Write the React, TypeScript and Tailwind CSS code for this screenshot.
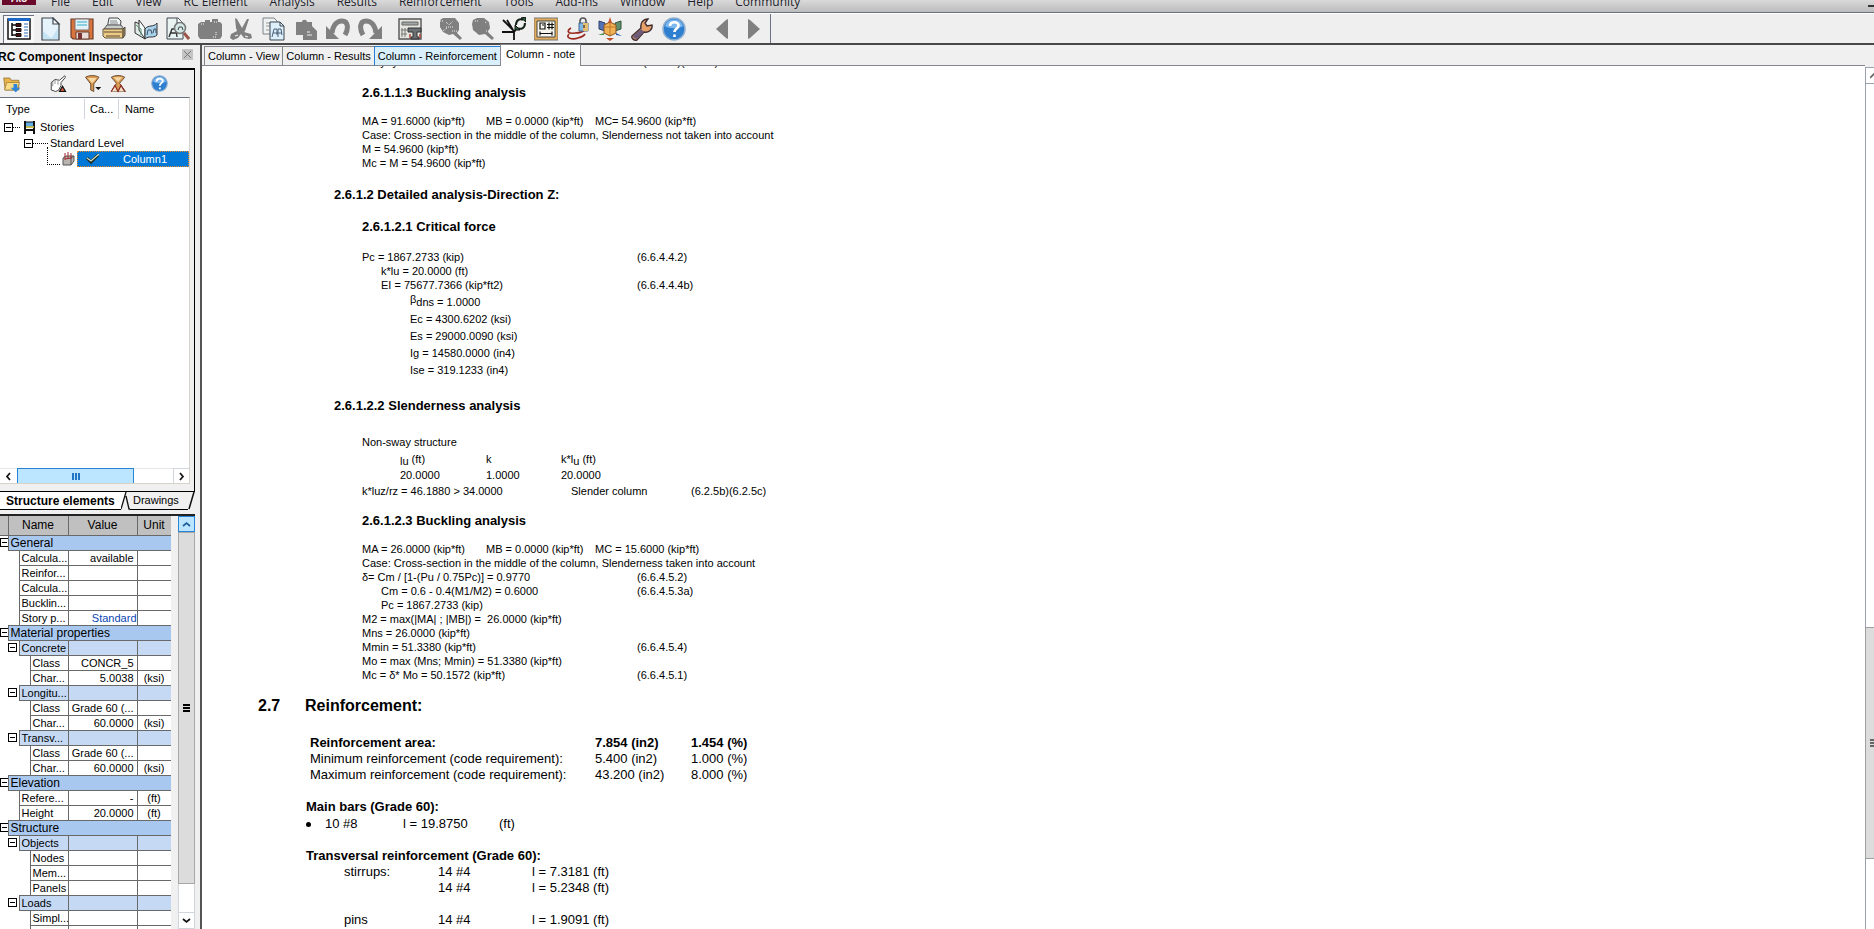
import { useState, type ReactNode } from "react";

const menus = ["File", "Edit", "View", "RC Element", "Analysis", "Results", "Reinforcement", "Tools", "Add-Ins", "Window", "Help", "Community"];

const tabs = ["Column - View", "Column - Results", "Column - Reinforcement", "Column - note"];

type PropRow = { level: 1 | 2 | 3; group?: boolean; name: string; value?: string; unit?: string; link?: boolean };

const props: PropRow[] = [
    { level: 1, group: true, name: "General" },
    { level: 2, name: "Calcula...", value: "available" },
    { level: 2, name: "Reinfor..." },
    { level: 2, name: "Calcula..." },
    { level: 2, name: "Bucklin..." },
    { level: 2, name: "Story p...", value: "Standard", link: true },
    { level: 1, group: true, name: "Material properties" },
    { level: 2, group: true, name: "Concrete" },
    { level: 3, name: "Class", value: "CONCR_5" },
    { level: 3, name: "Char...", value: "5.0038", unit: "(ksi)" },
    { level: 2, group: true, name: "Longitu..." },
    { level: 3, name: "Class", value: "Grade 60 (..." },
    { level: 3, name: "Char...", value: "60.0000", unit: "(ksi)" },
    { level: 2, group: true, name: "Transv..." },
    { level: 3, name: "Class", value: "Grade 60 (..." },
    { level: 3, name: "Char...", value: "60.0000", unit: "(ksi)" },
    { level: 1, group: true, name: "Elevation" },
    { level: 2, name: "Refere...", value: "-", unit: "(ft)" },
    { level: 2, name: "Height", value: "20.0000", unit: "(ft)" },
    { level: 1, group: true, name: "Structure" },
    { level: 2, group: true, name: "Objects" },
    { level: 3, name: "Nodes" },
    { level: 3, name: "Mem..." },
    { level: 3, name: "Panels" },
    { level: 2, group: true, name: "Loads" },
    { level: 3, name: "Simpl..." },
    { level: 3, name: "" },
];

function Svg({ size = 24, children }: { size?: number; children: ReactNode }) {
    return (
        <svg width={size} height={size} viewBox="0 0 24 24" fill="none" className="block shrink-0">
            {children}
        </svg>
    );
}

const HelpIcon = ({ size = 24 }: { size?: number }) => (
    <Svg size={size}>
        <circle cx="12" cy="12" r="11" fill="#2f7fd0" stroke="#8fb0d0" strokeWidth="1.5" />
        <path d="M3 9a9.5 9.5 0 0 1 18 0c-4 3-14 3-18 0z" fill="#7db8ee" />
        <path d="M8 9c0-5 8.500-5 8.500-.5 0 3-4 3-4 6.500M12.500 17.500v2.500" stroke="#fff" strokeWidth="2.600" />
    </Svg>
);

const icons: Record<string, ReactNode> = {
    "Inspector": (
        <Svg>
            <path d="M1 2h22v20H1z" fill="#fff" stroke="#111" strokeWidth="1.500" />
            <path d="M1 1h22v3H1z" fill="#1766c8" />
            <path d="M5 6v13M5 8h5M5 13h6M5 18h5" stroke="#111" strokeWidth="1.600" />
            <path d="M9 6.500h5v3H9zM9 11.500h5v3H9zM9 16.500h5v3H9z" fill="#4a1010" stroke="#111" />
            <path d="M17 7h4M17 10h4M17 13h4M17 16h4M17 19h4" stroke="#2f6fb8" strokeWidth="1.200" />
        </Svg>
    ),
    "New": (
        <Svg>
            <path d="M4 1h11l6 6v16H4z" fill="#e6f3fa" stroke="#3c4650" strokeWidth="1.200" />
            <path d="M5 14l9 8H5zM20 11v11h-7z" fill="#b5dcf0" opacity=".7" />
            <path d="M15 1v6h6z" fill="#fff" stroke="#3c4650" strokeWidth="1.200" />
        </Svg>
    ),
    "Save": (
        <Svg>
            <path d="M1 2h22v20H3l-2-2z" fill="#d9743c" stroke="#6b3d2c" strokeWidth="1.200" />
            <path d="M5 2h14v11H5z" fill="#e4f2f8" stroke="#7c6a6a" />
            <path d="M7 5h10M7 8h10" stroke="#6cc3d8" strokeWidth="1.300" />
            <path d="M6 15h13v7H6z" fill="#e8dcd8" stroke="#6b3d2c" />
            <path d="M8 16h4v6H8z" fill="#7a3232" />
        </Svg>
    ),
    "Print": (
        <Svg>
            <path d="M7 1h9l3 3-1 8H5z" fill="#eef4f5" stroke="#444" />
            <path d="M8 4h7M8 6h8M7 8h9" stroke="#888" />
            <path d="M2 12l3-4h14l3 4z" fill="#c9ccc8" stroke="#555" />
            <path d="M1 12h20v9H3l-2-2z" fill="#eccb86" stroke="#665a44" />
            <path d="M21 12l2-2v8l-2 3z" fill="#a98c60" stroke="#554a3c" />
            <path d="M2 15h19M4 19h14" stroke="#8d7550" strokeWidth="1.300" />
        </Svg>
    ),
    "Preview book": (
        <Svg>
            <path d="M1 5l5 2 5 7v8l-5-3-5-3z" fill="#e0ebe8" stroke="#333" />
            <path d="M5 3l6 8v11l-6-9z" fill="#f8fbfb" stroke="#333" />
            <path d="M11 12c4-5 8-1 12-6v12c-4 4-8 0-12 4z" fill="#a9d3ec" stroke="#333" />
            <path d="M13 18l1-5h3l1 4M19 16l1-4 2 0v4" stroke="#414f60" />
            <path d="M2 8l5 4v6" stroke="#55946e" />
        </Svg>
    ),
    "Print preview": (
        <Svg>
            <path d="M1 1h11l5 5v16H1z" fill="#e8f3f2" stroke="#3c4650" />
            <path d="M11 1v5h6" fill="#fff" stroke="#3c4650" />
            <path d="M3 20l3-8h4l1 8M5 16h6" stroke="#333" strokeWidth="1.400" />
            <circle cx="14" cy="11" r="5.500" fill="#d5e8e8" stroke="#777" strokeWidth="1.500" />
            <path d="M12 13l1-3 3 0 1 3" stroke="#444" />
            <path d="M18 16l5 6" stroke="#9a5648" strokeWidth="3" />
        </Svg>
    ),
    "Camera": (
        <Svg>
            <path d="M3 5h4V3h5v2h2V2h6v3h2l2 2v12l-2 3H2l-2-3V7z" fill="#808080" />
            <path d="M3 7h4M16 5h4" stroke="#efefef" strokeDasharray="1 1" />
            <path d="M18 15v4M15 20h4" stroke="#fff" strokeDasharray="1 1" />
        </Svg>
    ),
    "Cut": (
        <Svg>
            <path d="M5 1l2 1 5 9 5-9 2 0-4 12-1 1 7 2 1 4-3 1-5-1-3-4-3 4-5 2-3-2 1-4 6-3-1-3z" fill="#808080" />
            <path d="M5 19l3-1M15 19l3 1" stroke="#efefef" strokeWidth="1.200" />
        </Svg>
    ),
    "Copy": (
        <Svg>
            <path d="M1 1h11l3 3v13H1z" fill="#eef2f2" stroke="#7c8488" />
            <path d="M4 6h6M4 9h5M4 13h3" stroke="#999" />
            <path d="M8 5h10l4 4v14H8z" fill="#dceffa" stroke="#3c4650" />
            <path d="M18 5v4h4" stroke="#3c4650" />
            <path d="M10 20l2-8h3v6M16 20v-8h3l1 6M11 16h9" stroke="#4a6078" />
        </Svg>
    ),
    "Paste": (
        <Svg>
            <path d="M2 5h6c0-3 5-3 5 0h5v4l5 5v9H9v-5H2z" fill="#808080" />
            <path d="M13 15h3M13 18h5" stroke="#efefef" strokeWidth="1.200" />
        </Svg>
    ),
    "Undo": (
        <Svg>
            <path d="M0 22V9l13 13z" fill="#808080" />
            <path d="M6 16C7 8 11 4 16 4c6 0 7 7 3 14" stroke="#808080" strokeWidth="5" />
        </Svg>
    ),
    "Redo": (
        <Svg>
            <path d="M24 22V9L11 22z" fill="#808080" />
            <path d="M18 16C17 8 13 4 8 4 2 4 1 11 5 18" stroke="#808080" strokeWidth="5" />
        </Svg>
    ),
    "Calculate": (
        <Svg>
            <path d="M1 2h22v20H1z" fill="#e6e6e0" stroke="#555" strokeWidth="1.400" />
            <path d="M4 5h16v3H4z" fill="#9fa7a4" stroke="#666" />
            <path d="M3 13h6M3 17h6M4 11v9M7 11v9" stroke="#777" />
            <path d="M10 11h13v4h-4v5h2v2h-8v-2h2v-5h-5z" fill="#6c7173" stroke="#333" />
            <path d="M12 17v4M22 17v4" stroke="#b4463c" strokeWidth="1.500" />
        </Svg>
    ),
    "Zoom window": (
        <Svg>
            <path d="M5 1h12l4 5v7l-2 3 5 5-2 2-7-6-4 1-6-3-3-5V3z" fill="#808080" />
            <path d="M2 4h3M8 5l3 3 4-4M8 10h8M5 14l4-3M14 14h5" stroke="#efefef" strokeDasharray="1 1" />
        </Svg>
    ),
    "Zoom": (
        <Svg>
            <path d="M7 1h7l5 4 1 6-2 4 6 6-2 2-7-6-6 1-6-5-1-6 1-4z" fill="#808080" />
            <path d="M5 4h3M15 5l2 1M16 14h3" stroke="#efefef" strokeDasharray="1 1" />
        </Svg>
    ),
    "Axes": (
        <Svg>
            <path d="M1 3l11 11v9M0 15h12l3-4M5 3l6 10" stroke="#111" strokeWidth="1.800" />
            <path d="M14 8c0-5 4-7 7-5M23 6c0 5-4 7-7 5" stroke="#142018" strokeWidth="2" />
            <path d="M19 1l5-1v5zM18 13l-5 0v-5z" fill="#27593a" stroke="#111" />
        </Svg>
    ),
    "Display settings": (
        <Svg>
            <path d="M0 1h24v22H0z" fill="#e2ab58" stroke="#777" />
            <path d="M3 4h18v16H3z" fill="#f6f6ee" stroke="#444" />
            <path d="M6 6h5v6H6zM8 8h2M13 7.500h7M13 10.500h7M15 5.500v7M18 5.500v7M6 16.500h12M6 14.500v4M18 14.500v4" stroke="#111" strokeWidth="1.200" />
        </Svg>
    ),
    "Lock reinforcement": (
        <Svg>
            <path d="M5 11c-5 3-3 6 4 5 5 0 9-2 10-4M3 17c-4 4 3 6 9 4 4-1 6-2 7-4" stroke="#9a2a20" strokeWidth="1.700" />
            <path d="M14 6V4c0-4 6-4 6 0v2" stroke="#555" strokeWidth="1.600" />
            <path d="M13 6h9v8h-9z" fill="#7db7e4" stroke="#44648a" />
            <path d="M17 6h5v8h-5z" fill="#e7bf72" />
            <path d="M18 8v3" stroke="#111" />
        </Svg>
    ),
    "View cube": (
        <Svg>
            <path d="M1 4l6 2v8l-6-2z" fill="#5375b8" stroke="#304068" />
            <path d="M23 4l-6 2v8l6-2z" fill="#5f8f6b" stroke="#35543d" />
            <path d="M6 8l6-3 6 3v8l-6 3-6-3z" fill="#f0b255" stroke="#8a5520" />
            <path d="M12 5v13M7 10h11" stroke="#c07828" />
            <path d="M12 0l2 6h-4zM12 24l-4-3h8z" fill="#c2502c" />
            <path d="M0 18l6-2v2z" fill="#4a9050" />
            <path d="M24 19l-6-3v2z" fill="#2858b0" />
        </Svg>
    ),
    "Preferences": (
        <Svg>
            <path d="M2 19l9-8c-1-5 2-9 7-9l-3 4 2 3 5-1c1 5-4 8-8 7l-7 8c-3 1-6-2-5-4z" fill="#e6a16a" stroke="#402c30" strokeWidth="1.400" />
            <path d="M3 19l8-7 3 3-7 7c-2 0-4-1-4-3z" fill="#6d5c78" />
        </Svg>
    ),
    "Help": <HelpIcon />,
    "Previous": (
        <Svg>
            <path d="M6 12L16 3l2-1v20l-2-1z" fill="#808080" />
        </Svg>
    ),
    "Next": (
        <Svg>
            <path d="M18 12L8 3 6 2v20l2-1z" fill="#808080" />
        </Svg>
    ),
};

// the strip is split in blocks, each one has the same button pitch
const toolGroups = [
    ["New", "Save", "Print", "Preview book", "Print preview", "Camera", "Cut", "Copy", "Paste", "Undo", "Redo"],
    ["Calculate"],
    ["Zoom window", "Zoom", "Axes", "Display settings", "Lock reinforcement", "View cube", "Preferences", "Help"],
    ["Previous", "Next"],
];

function Toolbar() {
    return (
        <div className="flex h-[32px] items-center border-t border-b-2 border-t-white border-b-[#484848] bg-[#efefef] pl-[3px]">
            <button aria-label="Inspector" className="flex h-7 w-[31px] items-center justify-center border-t border-l border-gray-500 bg-[#f8f8f8]">
                {icons["Inspector"]}
            </button>
            <div className="flex gap-2">
                {toolGroups.map((group, i) => (
                    <div key={i} className="flex">
                        {group.map((name) => (
                            <button key={name} aria-label={name} className={name === "Previous" ? "ml-2 flex w-8 justify-center" : "flex w-8 justify-center"}>
                                {icons[name]}
                            </button>
                        ))}
                    </div>
                ))}
            </div>
            <div className="h-full border-l border-gray-500" />
        </div>
    );
}

function Toggle() {
    return (
        <button aria-label="Collapse" className="flex h-[9px] w-[9px] shrink-0 items-center justify-center border border-black bg-white">
            <span className="h-px w-[5px] bg-black" />
        </button>
    );
}

function Chevron({ d, color = "#111" }: { d: string; color?: string }) {
    return (
        <svg width="9" height="9" viewBox="0 0 9 9" fill="none" className="block shrink-0">
            <path d={d} stroke={color} strokeWidth="1.700" />
        </svg>
    );
}

function Tree() {
    return (
        <div className="w-[190px] border-t border-r border-t-gray-500 border-r-[#d6d2ca] bg-white">
            <div className="h-[370px]">
                <div className="flex h-[21px] items-center">
                    <span className="w-[85px] border-r border-gray-300 pl-[6px] leading-5">Type</span>
                    <span className="w-[34px] border-r border-gray-300 pl-[5px] leading-5">Ca...</span>
                    <span className="pl-[6px] leading-5">Name</span>
                </div>
                <ul>
                    <li className="flex h-4 items-center pl-1">
                        <Toggle />
                        <span className="mr-1 w-[7px] border-t border-dotted border-black" />
                        <svg width="12" height="13" viewBox="0 0 12 13" fill="none" className="mr-1">
                            <path d="M1 1h9v5H1z" fill="#62aee8" stroke="#111" />
                            <path d="M1 0v13M10 0v13M1 9h9" stroke="#111" strokeWidth="2" />
                            <path d="M2 6h8" stroke="#e5d34a" strokeWidth="1.500" />
                        </svg>
                        Stories
                    </li>
                    <li className="flex h-4 items-center pl-6">
                        <Toggle />
                        <span className="mr-[2px] w-[15px] border-t border-dotted border-black" />
                        Standard Level
                    </li>
                    <li className="flex h-4 items-center pl-[47px]">
                        <span className="mb-[6px] h-[18px] w-[13px] border-b border-l border-dotted border-black" />
                        <svg width="13" height="14" viewBox="0 0 13 14" fill="none" className="mx-[2px]">
                            <path d="M1 6l3-2h8v5l-3 4H1z" fill="#b9b4b0" stroke="#555" />
                            <path d="M9 13V6L12 4" stroke="#555" />
                            <path d="M3 8V1M6 6V0M9 7V1M3 7l6-1" stroke="#a3282c" />
                        </svg>
                        <button className="flex h-4 flex-1 items-center border border-dotted border-[#e88a20] bg-[#0078d7] pl-2 text-white">
                            <svg width="14" height="10" viewBox="0 0 14 10" fill="none" className="mr-[23px]">
                                <path d="M1 4l4 4 7-7" stroke="#1c2a20" strokeWidth="3" />
                                <path d="M1 4l4 3 8-7" stroke="#d8dcb8" strokeWidth="1.300" />
                            </svg>
                            Column1
                        </button>
                    </li>
                </ul>
            </div>
            <div className="flex h-4 border-b border-[#d6d2ca]">
                <button aria-label="Scroll left" className="flex w-[17px] items-center justify-center border-t border-gray-200"><Chevron d="M6 1L3 4.500 6 8" /></button>
                <div className="flex w-[117px] items-center justify-center gap-[1px] border border-b-0 border-[#2a84d4] bg-[#bce6ff]">
                    <span className="h-[7px] w-[2px] bg-[#1f74c8]" />
                    <span className="h-[7px] w-[2px] bg-[#1f74c8]" />
                    <span className="h-[7px] w-[2px] bg-[#1f74c8]" />
                </div>
                <div className="flex-1 border-t border-gray-200" />
                <button aria-label="Scroll right" className="flex w-4 items-center justify-center border-t border-l border-gray-300"><Chevron d="M3 1l3 3.500L3 8" /></button>
            </div>
        </div>
    );
}

function Inspector() {
    return (
        <section>
            <header className="flex h-[23px] items-center justify-between pr-[7px]">
                <h2 className="-ml-[2px] text-xs leading-[14px] font-bold whitespace-nowrap">RC Component Inspector</h2>
                <button aria-label="Close" className="mb-1 flex h-[11px] w-[11px] items-center justify-center bg-[#c4c4c4]">
                    <svg width="7" height="7" viewBox="0 0 7 7"><path d="M0 0l7 7M7 0L0 7" stroke="#777" /></svg>
                </button>
            </header>
            <div className="w-[195px] border-t-2 border-r border-b border-black pb-[7px]">
                <div className="flex h-[27px] items-center pl-[3px]">
                    <button aria-label="Open" className="mr-7">
                        <Svg size={18}>
                            <path d="M1 4h8l2 3h10v13H3z" fill="#e9b54c" stroke="#8d6a2a" />
                            <path d="M5 10h17l-3 10H2z" fill="#fbdc8a" stroke="#a07a30" />
                            <path d="M14 12h5v5h4l-6 6-7-6h4z" fill="#2f86d8" />
                        </Svg>
                    </button>
                    <button aria-label="Select" className="mr-3">
                        <Svg size={18}>
                            <path d="M3 20V10l5-4 6 1 7-6 1 2-6 7v4l-3 6-4 2z" fill="#fff" stroke="#444" strokeWidth="1.300" />
                            <path d="M8 6v6M5 9v6M12 8v5" stroke="#777" />
                            <path d="M14 22l4-7 4 7z" fill="#c9563c" stroke="#111" strokeWidth="1.600" />
                        </Svg>
                    </button>
                    <button aria-label="Filter" className="mr-[7px] ml-[5px]">
                        <Svg size={18}>
                            <path d="M2 3c5-3 13-3 18 0l-7 9v10l-4-2v-8z" fill="#d99b52" stroke="#6c4a30" strokeWidth="1.300" />
                            <path d="M5 4h12l-6 7z" fill="#f6d9a4" />
                            <path d="M15 16h8l-4 4z" fill="#111" />
                        </Svg>
                    </button>
                    <button aria-label="Filter by type" className="mr-6">
                        <Svg size={18}>
                            <path d="M3 3c5-3 13-3 18 0l-7 8 8 11H3l7-11z" fill="#d99b52" stroke="#6c4a30" strokeWidth="1.300" />
                            <path d="M6 3h12l-6 6z" fill="#f6d9a4" />
                            <path d="M3 22l5-8 4 8 4-8 5 8" fill="#f1e0c8" stroke="#8a2420" strokeWidth="1.500" />
                        </Svg>
                    </button>
                    <button aria-label="Inspector help"><HelpIcon size={17} /></button>
                </div>
                <Tree />
            </div>
            <div className="flex h-[18px] w-[195px] items-stretch">
                <button className="flex w-[121px] items-center border-b border-black bg-white pl-[6px] text-xs font-bold whitespace-nowrap">Structure elements</button>
                <svg width="9" height="18" viewBox="0 0 9 18" fill="none" className="block shrink-0">
                    <path d="M0 0h5L0 18z" fill="#fff" />
                    <path d="M5 0L0 17M5 4l3 13h1" stroke="#111" strokeWidth="1.300" />
                </svg>
                <button className="flex flex-1 items-center border-b border-black pl-[3px]">Drawings</button>
                <svg width="7" height="18" viewBox="0 0 7 18" fill="none" className="block shrink-0">
                    <path d="M6 0L1 17" stroke="#111" strokeWidth="1.500" />
                </svg>
            </div>
        </section>
    );
}

const line = "border border-[#696969]";

function PropertyRow({ row }: { row: PropRow }) {
    const valueCell = row.link ? "text-right text-[#0a46b4]" : "pr-[3px] text-right";
    const bg = row.group ? "bg-[#c5d9f5]" : "bg-white";

    if (row.level === 1) {
        return (
            <tr className="h-[15px]">
                <td><Toggle /></td>
                <td colSpan={5} className="border-y border-l border-[#696969] bg-[#a9c8f0] pl-[2px] text-xs leading-[14px]">{row.name}</td>
            </tr>
        );
    }
    return (
        <tr className="h-[15px]">
            <td />
            {row.level === 3 && <td />}
            <td>{row.group && <Toggle />}</td>
            <td colSpan={row.level === 2 ? 2 : 1} className={`${line} ${bg} overflow-hidden pl-[2px]`}>{row.name}</td>
            <td className={`${line} ${bg} overflow-hidden ${valueCell}`}>{row.value}</td>
            <td className={`${line} ${bg} text-center`}>{row.unit}</td>
        </tr>
    );
}

function Properties() {
    return (
        <section className="mt-[4px] flex min-h-0 w-[195px] flex-1 overflow-hidden border-t-2 border-[#222]">
            <div className="min-h-0 w-[171px] overflow-hidden bg-white">
                <table className="w-[171px] table-fixed border-collapse leading-[14px] whitespace-nowrap">
                    <colgroup>
                        <col className="w-[8px]" />
                        <col className="w-[11px]" />
                        <col className="w-[11px]" />
                        <col className="w-[38px]" />
                        <col className="w-[69px]" />
                        <col className="w-[34px]" />
                    </colgroup>
                    <thead>
                        <tr className="h-[19px] bg-[#c0c0c0] text-xs">
                            <th className="border-b border-[#696969]" />
                            <th colSpan={3} className={`${line} border-t-0 font-normal`}>Name</th>
                            <th className={`${line} border-t-0 font-normal`}>Value</th>
                            <th className={`${line} border-t-0 font-normal`}>Unit</th>
                        </tr>
                    </thead>
                    <tbody>
                        {props.map((row, i) => (
                            <PropertyRow key={i} row={row} />
                        ))}
                    </tbody>
                </table>
            </div>
            <div className="ml-[7px] flex flex-1 flex-col bg-white">
                <button aria-label="Scroll up" className="flex h-4 items-center justify-center border border-[#2a84d4] bg-[#bce6ff]"><Chevron d="M1 6l3.500-3L8 6" color="#1f5f98" /></button>
                <div className="flex flex-1 flex-col items-center justify-center gap-[1px] border border-[#a8a8a8] bg-[#dcdcdc]">
                    <span className="h-[2px] w-[7px] bg-black" />
                    <span className="h-[2px] w-[7px] bg-black" />
                    <span className="h-[2px] w-[7px] bg-black" />
                </div>
                <div className="h-7 border-x border-gray-300" />
                <button aria-label="Scroll down" className="flex h-[17px] items-center justify-center border border-gray-300"><Chevron d="M1 3l3.500 3L8 3" /></button>
            </div>
        </section>
    );
}

function Heading({ className, children }: { className: string; children: ReactNode }) {
    return <h3 className={`text-[13px] leading-4 font-bold ${className}`}>{children}</h3>;
}

// text + code reference on the right
function Line({ text, code, className = "" }: { text: ReactNode; code?: string; className?: string }) {
    return (
        <div className="flex leading-[14px]">
            <p className={`w-[275px] ${className}`}>{text}</p>
            <p>{code}</p>
        </div>
    );
}

function Moments({ ma, mb, mc }: { ma: string; mb: string; mc: string }) {
    return (
        <div className="flex leading-[14px]">
            <p className="w-[124px]">{ma}</p>
            <p className="w-[109px]">{mb}</p>
            <p>{mc}</p>
        </div>
    );
}

function Note() {
    return (
        <article className="-mt-[11px] pl-[56px] whitespace-nowrap">
            <div className="pl-[104px]">
                <div className="flex leading-[14px]">
                    <p className="w-[281px]">k*luy/ry</p>
                    <p>(6.2.5b)(6.2.5c)</p>
                </div>
                <Heading className="mt-4">2.6.1.1.3 Buckling analysis</Heading>
                <div className="mt-[13px]">
                    <Moments ma="MA = 91.6000 (kip*ft)" mb="MB = 0.0000 (kip*ft)" mc="MC= 54.9600 (kip*ft)" />
                    <Line text="Case: Cross-section in the middle of the column, Slenderness not taken into account" />
                    <Line text="M = 54.9600 (kip*ft)" />
                    <Line text="Mc = M = 54.9600 (kip*ft)" />
                </div>
            </div>

            <Heading className="mt-[17px] pl-[76px]">2.6.1.2 Detailed analysis-Direction Z:</Heading>
            <Heading className="mt-4 pl-[104px]">2.6.1.2.1 Critical force</Heading>
            <div className="mt-[15px] pl-[104px]">
                <Line text="Pc = 1867.2733 (kip)" code="(6.6.4.4.2)" />
                <Line text="k*lu = 20.0000 (ft)" className="pl-[19px]" />
                <Line text="EI = 75677.7366 (kip*ft2)" code="(6.6.4.4.4b)" className="pl-[19px]" />
                <div className="mt-[2px] pl-12 leading-[17px]">
                    <p className="h-[17px]"><sup className="-top-[3px] text-[11px] leading-[0]">β</sup>dns = 1.0000</p>
                    <p>Ec = 4300.6202 (ksi)</p>
                    <p>Es = 29000.0090 (ksi)</p>
                    <p>Ig = 14580.0000 (in4)</p>
                    <p>Ise = 319.1233 (in4)</p>
                </div>
            </div>

            <Heading className="mt-[19px] pl-[76px]">2.6.1.2.2 Slenderness analysis</Heading>
            <div className="mt-[21px] pl-[104px]">
                <Line text="Non-sway structure" />
                <table className="mt-[2px] ml-[38px] leading-4">
                    <tbody>
                        <tr className="h-4 align-top">
                            <td className="w-[86px]"><sub className="-bottom-[2px] text-[11px] leading-[0]">lu</sub> (ft)</td>
                            <td className="w-[75px]">k</td>
                            <td>k*l<sub className="-bottom-[2px] text-[11px] leading-[0]">u</sub> (ft)</td>
                        </tr>
                        <tr className="h-4">
                            <td>20.0000</td>
                            <td>1.0000</td>
                            <td>20.0000</td>
                        </tr>
                    </tbody>
                </table>
                <div className="flex leading-4">
                    <p className="w-[209px]">k*luz/rz = 46.1880 &gt; 34.0000</p>
                    <p className="w-[120px]">Slender column</p>
                    <p>(6.2.5b)(6.2.5c)</p>
                </div>
                <Heading className="mt-[14px]">2.6.1.2.3 Buckling analysis</Heading>
                <div className="mt-[13px]">
                    <Moments ma="MA = 26.0000 (kip*ft)" mb="MB = 0.0000 (kip*ft)" mc="MC = 15.6000 (kip*ft)" />
                    <Line text="Case: Cross-section in the middle of the column, Slenderness taken into account" />
                    <Line text="δ= Cm / [1-(Pu / 0.75Pc)] = 0.9770" code="(6.6.4.5.2)" />
                    <Line text="Cm = 0.6 - 0.4(M1/M2) = 0.6000" code="(6.6.4.5.3a)" className="pl-[19px]" />
                    <Line text="Pc = 1867.2733 (kip)" className="pl-[19px]" />
                    <Line text={"M2 = max(|MA| ; |MB|) =\u00a0 26.0000 (kip*ft)"} />
                    <Line text="Mns = 26.0000 (kip*ft)" />
                    <Line text="Mmin = 51.3380 (kip*ft)" code="(6.6.4.5.4)" />
                    <Line text="Mo = max (Mns; Mmin) = 51.3380 (kip*ft)" />
                    <Line text="Mc = δ* Mo = 50.1572 (kip*ft)" code="(6.6.4.5.1)" />
                </div>
            </div>

            <h2 className="mt-[14px] flex text-base leading-5 font-bold">
                <span className="w-[47px]">2.7</span>
                Reinforcement:
            </h2>
            <div className="pl-12 text-[13px] leading-4">
                <table className="mt-[19px] ml-1">
                    <tbody>
                        <tr className="font-bold">
                            <td className="w-[285px]">Reinforcement area:</td>
                            <td className="w-24">7.854 (in2)</td>
                            <td>1.454 (%)</td>
                        </tr>
                        <tr>
                            <td>Minimum reinforcement (code requirement):</td>
                            <td>5.400 (in2)</td>
                            <td>1.000 (%)</td>
                        </tr>
                        <tr>
                            <td>Maximum reinforcement (code requirement):</td>
                            <td>43.200 (in2)</td>
                            <td>8.000 (%)</td>
                        </tr>
                    </tbody>
                </table>
                <h4 className="mt-4 font-bold">Main bars (Grade 60):</h4>
                <div className="mt-[1px] flex items-center">
                    <span className="mr-[14px] h-[5px] w-[5px] rounded-full bg-black" />
                    <p className="w-[78px]">10 #8</p>
                    <p className="w-[96px]">l = 19.8750</p>
                    <p>(ft)</p>
                </div>
                <h4 className="mt-4 font-bold">Transversal reinforcement (Grade 60):</h4>
                <div className="grid grid-cols-[94px_94px_auto] justify-start pl-[38px]">
                    <p>stirrups:</p>
                    <p>14 #4</p>
                    <p>l = 7.3181 (ft)</p>
                    <p />
                    <p>14 #4</p>
                    <p>l = 5.2348 (ft)</p>
                    <p className="mt-4">pins</p>
                    <p className="mt-4">14 #4</p>
                    <p className="mt-4">l = 1.9091 (ft)</p>
                </div>
            </div>
        </article>
    );
}

export default function App() {
    const [active, setActive] = useState(3);

    const tabStyle = (i: number) => {
        if (i === active) return "h-[22px] border border-b-0 border-[#85858c] bg-white px-[5px] pb-[3px]";
        if (i === 2) return "h-5 border border-r-0 border-[#85858c] border-t-[#2a7fd4] border-l-[#2a7fd4] bg-[#d9effc] px-[3px]";
        return "h-5 border border-r-0 border-[#85858c] px-[3px]";
    };

    return (
        <div className="flex h-screen flex-col overflow-hidden bg-[#f0f0f0] font-['Liberation_Sans',Arial,sans-serif] text-[11px] text-black">
            <nav className="flex h-[13px] shrink-0 overflow-hidden border-b border-gray-500 bg-linear-to-b from-[#dadada] to-[#bcbcbc] font-['Open_Sans',sans-serif] text-xs leading-4 text-[#1e1e2c]">
                <div className="ml-[2px] h-[5px] w-[34px] overflow-hidden bg-[#6a0a2a]">
                    <span className="-mt-[5px] block text-center text-[8px] leading-2 font-bold text-white">PRO</span>
                </div>
                <div className="-mt-[6px] ml-[15px] flex flex-1 gap-[22px]">
                    {menus.map((m) => (
                        <button key={m} className="h-4 whitespace-nowrap">{m}</button>
                    ))}
                </div>
                <button aria-label="Minimize" className="mt-[5px] h-[2px] w-[6px] bg-[#333]" />
            </nav>
            <Toolbar />
            <div className="flex min-h-0 flex-1">
                <aside className="flex w-[200px] shrink-0 flex-col overflow-hidden">
                    <Inspector />
                    <Properties />
                </aside>
                <main className="flex min-w-0 flex-1 flex-col border-l-2 border-[#555]">
                    <div className="flex h-[21px] shrink-0">
                        <div className="w-[2px] border-b border-[#85858c]" />
                        <div className="flex items-end">
                            {tabs.map((t, i) => (
                                <button key={t} onClick={() => setActive(i)} className={`whitespace-nowrap ${tabStyle(i)}`}>{t}</button>
                            ))}
                        </div>
                        <div className="mr-[9px] flex-1 border-b border-[#85858c]" />
                    </div>
                    <div className="flex min-h-0 flex-1">
                        <div className="min-w-0 flex-1 overflow-hidden bg-white">
                            <Note />
                        </div>
                        <div className="mt-[1px] flex w-[9px] flex-col overflow-hidden bg-white">
                            <button aria-label="Scroll note up" className="flex h-[17px] shrink-0 items-center border border-r-0 border-gray-400 pl-1"><Chevron d="M0 7l4-4 4 4" color="#666" /></button>
                            <div className="grow-[545] basis-0 border-l border-gray-400" />
                            <div className="flex grow-[231] basis-0 flex-col items-end justify-center gap-[1px] border border-r-0 border-[#a0a0a0] bg-[#dcdcdc]">
                                <span className="h-[2px] w-1 bg-[#666]" />
                                <span className="h-[2px] w-1 bg-[#666]" />
                                <span className="h-[2px] w-1 bg-[#666]" />
                            </div>
                            <div className="grow-[70] basis-0 border-l border-gray-400" />
                        </div>
                    </div>
                </main>
            </div>
        </div>
    );
}
